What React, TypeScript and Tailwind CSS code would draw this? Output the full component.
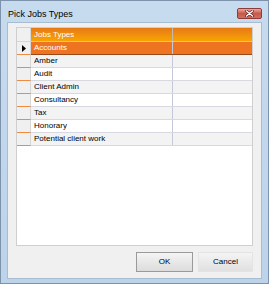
import React from "react";

const rows = [
  "Accounts",
  "Amber",
  "Audit",
  "Client Admin",
  "Consultancy",
  "Tax",
  "Honorary",
  "Potential client work",
];

function CloseButton() {
  return (
    <div className="w-[25px] h-[11px] rounded-[2px] border border-[#8e3b3b] bg-gradient-to-b from-[#e9a99d] via-[#c9584a] to-[#cf6f5f] flex items-center justify-center">
      <svg width="9" height="7" viewBox="0 0 9 7">
        <path d="M1.5 1 L7.5 6 M7.5 1 L1.5 6" stroke="#5a1f1a" strokeWidth="2.6" strokeLinecap="round" />
        <path d="M1.5 1 L7.5 6 M7.5 1 L1.5 6" stroke="#ffffff" strokeWidth="1.4" strokeLinecap="round" />
      </svg>
    </div>
  );
}

function GridRow({ label, index }: { label: string; index: number }) {
  const selected = index === 0;
  const alt = index % 2 === 1;
  return (
    <div className="flex h-[13px]">
      <div className="w-[14px] shrink-0 bg-[#f0f0f0] border-r border-[#d6d6d6] border-b border-b-[#ee8a44] flex items-center justify-center">
        {selected && (
          <svg width="4" height="7" viewBox="0 0 4 7">
            <path d="M0 0 L4 3.5 L0 7 Z" fill="#000" />
          </svg>
        )}
      </div>
      <div
        className={
          selected
            ? "flex flex-1 bg-[#ef7422] border-b border-[#9a4a1a] text-white"
            : alt
            ? "flex flex-1 bg-[#f3f3f3] border-b border-[#d8d8e0] text-black"
            : "flex flex-1 bg-white border-b border-[#d8d8e0] text-black"
        }
      >
        <div className="w-[142px] pl-[3px] leading-[12px] border-r border-[#c4c8d8]">{label}</div>
        <div className="flex-1" />
      </div>
    </div>
  );
}

export default function App() {
  return (
    <div
      className="w-[269px] h-[284px] bg-gradient-to-b from-[#c7dbef] to-[#bcd3ea] border border-[#7d93ab] flex flex-col"
      style={{ fontFamily: '"Liberation Sans", Arial, sans-serif' }}
    >
      {/* Title bar */}
      <div className="h-[21px] flex items-start justify-between pl-[7px] pr-[6px] pt-[7px]">
        <div className="text-[9px] leading-[12px] text-black">Pick Jobs Types</div>
        <CloseButton />
      </div>

      {/* Client area */}
      <div className="mx-[6px] mb-[4px] flex-1 bg-[#f0f0f0] border border-[#a9bdd2] flex flex-col px-[8px] pt-[4px] pb-[6px] text-[8px]">
        <div className="h-[219px] bg-white border border-[#cfcfcf] flex flex-col">
          {/* Header */}
          <div className="flex h-[14px]">
            <div className="w-[14px] shrink-0 bg-[#f0f0f0] border-r border-b border-[#d6d6d6]" />
            <div className="flex flex-1 bg-gradient-to-b from-[#e67a14] to-[#f8a400] text-white border-b border-[#c9c9c9]">
              <div className="w-[142px] pl-[3px] leading-[13px] border-r border-[#c8b8a8]">Jobs Types</div>
              <div className="flex-1" />
            </div>
          </div>
          {rows.map((r, i) => (
            <GridRow key={r} label={r} index={i} />
          ))}
        </div>

        {/* Buttons */}
        <div className="mt-auto flex justify-end gap-[5px]">
          <button className="w-[57px] h-[20px] border border-[#9a9a9a] bg-gradient-to-b from-[#f4f4f4] to-[#dcdcdc] text-[8px] text-black">
            OK
          </button>
          <button className="w-[55px] h-[20px] border border-[#e4e4e4] bg-gradient-to-b from-[#f4f4f4] to-[#e0e0e0] text-[8px] text-black">
            Cancel
          </button>
        </div>
      </div>
    </div>
  );
}
